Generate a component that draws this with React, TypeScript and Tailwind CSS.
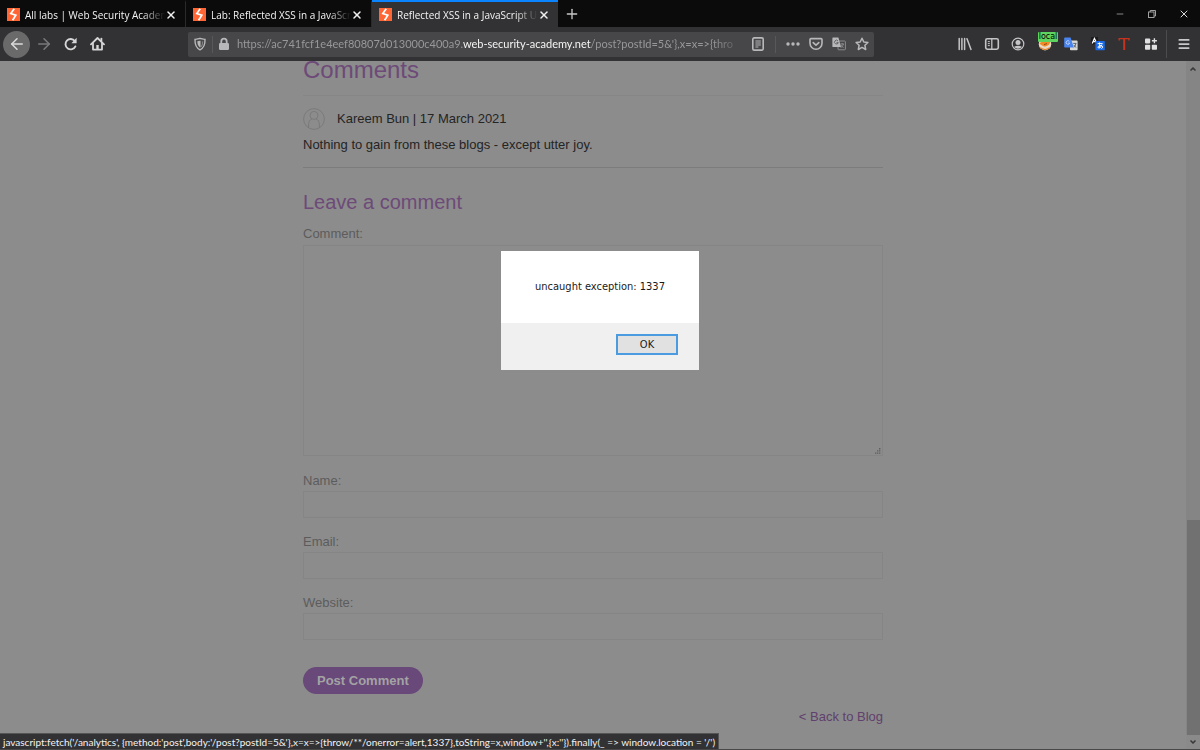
import type { ReactNode } from "react";
import { ArrowLeft, ArrowRight, ChevronDown, ChevronUp, Menu, Minus, Plus, X } from "lucide-react";

const TABS = [
  { id: 1, title: "All labs | Web Security Academ", active: false },
  { id: 2, title: "Lab: Reflected XSS in a JavaScri", active: false },
  { id: 3, title: "Reflected XSS in a JavaScript U", active: true },
];

const FIELDS = [
  { id: "name", label: "Name:", type: "text" },
  { id: "email", label: "Email:", type: "email" },
  { id: "website", label: "Website:", type: "text" },
];

const STATUS =
  "javascript:fetch('/analytics', {method:'post',body:'/post?postId=5&'},x=x=>{throw/**/onerror=alert,1337},toString=x,window+'',{x:''}).finally(_ => window.location = '/')";

const Favicon = () => (
  <svg viewBox="0 0 13 13" className="w-[13px] h-[13px] shrink-0">
    <rect width="13" height="13" fill="#ff6633" />
    <path d="M7.2 0.8 L3.8 5.6 L8.8 7.2 L5.6 12.2" fill="none" stroke="#fff" strokeWidth="1.7" />
  </svg>
);

const ReloadIcon = () => (
  <svg viewBox="0 0 16 16" className="w-4 h-4" fill="none" stroke="#d6d6d7" strokeWidth="1.9" strokeLinecap="round">
    <path d="M12.4 10.4 A5.2 5.2 0 1 1 11.8 5" />
    <path d="M13.6 1.8 V7.2 H8.4 Z" fill="#d6d6d7" stroke="none" />
  </svg>
);

const HomeIcon = () => (
  <svg viewBox="0 0 16 16" className="w-4 h-4" fill="none" stroke="#d6d6d7" strokeWidth="1.8" strokeLinecap="round" strokeLinejoin="round">
    <path d="M1 8.4 L7.5 2 L14 8.4" />
    <path d="M3 7.4 V13.6 H12 V7.4" />
    <path d="M7.5 13.5 V9" strokeWidth="2.4" strokeLinecap="butt" />
    <path d="M11.4 2.6 V5" />
  </svg>
);

const ShieldIcon = () => (
  <svg viewBox="0 0 14 14" className="w-3.5 h-3.5 shrink-0" fill="none" stroke="#b8b8ba" strokeWidth="1.4">
    <path d="M7 1.3 C9 2 10.6 2.2 12 2.4 C12.2 7.5 10.8 11 7 12.8 C3.2 11 1.8 7.5 2 2.4 C3.4 2.2 5 2 7 1.3 Z" />
    <path d="M7 3.8 V10.4 C5 9 4.3 7 4.3 4.3 Z" fill="#b8b8ba" stroke="none" />
    <path d="M7.6 3.8 V10.2 C9.2 9 9.6 7 9.7 4.4" strokeWidth="0.6" />
  </svg>
);

const LockIcon = () => (
  <svg viewBox="0 0 12 14" className="w-3 h-3.5 shrink-0">
    <rect x="1" y="6" width="10" height="7" rx="1.2" fill="#b8b8ba" />
    <path d="M3.3 6.5 V4.4 A2.7 2.7 0 0 1 8.7 4.4 V6.5" fill="none" stroke="#b8b8ba" strokeWidth="1.8" />
  </svg>
);

const ReaderIcon = () => (
  <svg viewBox="0 0 14 14" className="w-3.5 h-3.5" fill="none" stroke="#b8b8ba">
    <rect x="1.8" y="0.9" width="10.4" height="12.2" rx="1.4" strokeWidth="1.6" />
    <path d="M4.4 4 H9.8 M4.4 6 H9.8 M4.4 8 H9.8 M4.4 10 H7.4" strokeWidth="1.1" />
  </svg>
);

const DotsIcon = () => (
  <svg viewBox="0 0 14 14" className="w-3.5 h-3.5" fill="#b8b8ba">
    <circle cx="2" cy="7" r="1.7" />
    <circle cx="7" cy="7" r="1.7" />
    <circle cx="12" cy="7" r="1.7" />
  </svg>
);

const PocketIcon = () => (
  <svg viewBox="0 0 14 14" className="w-3.5 h-3.5" fill="none" stroke="#b8b8ba" strokeWidth="1.6" strokeLinecap="round" strokeLinejoin="round">
    <path d="M2 1.6 H12 Q13 1.6 13 2.6 V6.3 A6 6 0 0 1 1 6.3 V2.6 Q1 1.6 2 1.6 Z" />
    <path d="M4.2 5.6 L7 8.2 L9.8 5.6" />
  </svg>
);

const TranslateIcon = () => (
  <svg viewBox="0 0 14 14" className="w-3.5 h-3.5">
    <rect x="6" y="4" width="7.4" height="8.8" rx="0.8" fill="none" stroke="#8b8b8d" />
    <path d="M8.4 7 H12 M10.2 6 V7 M11.4 7 C11 9 9.6 10.2 8.6 10.6 M9 8 C9.6 9.4 10.8 10.2 11.6 10.6" fill="none" stroke="#9b9b9d" strokeWidth="0.8" />
    <path d="M1 0.5 H6.4 L9 10 H1 Q0.4 10 0.4 9.4 V1 Q0.4 0.5 1 0.5 Z" fill="#b8b8ba" />
    <path d="M6 4 A1.9 1.9 0 1 0 6.3 5.6 H4.5" fill="none" stroke="#5a5a5c" strokeWidth="0.9" />
  </svg>
);

const StarIcon = () => (
  <svg viewBox="0 0 14 14" className="w-3.5 h-3.5" fill="none" stroke="#b8b8ba" strokeWidth="1.5" strokeLinejoin="round">
    <path d="M7 1.2 L8.8 5 L12.9 5.5 L9.9 8.3 L10.7 12.5 L7 10.4 L3.3 12.5 L4.1 8.3 L1.1 5.5 L5.2 5 Z" />
  </svg>
);

const LibraryIcon = () => (
  <svg viewBox="0 0 16 16" className="w-4 h-4" fill="none" stroke="#c4c4c6" strokeWidth="1.5" strokeLinecap="round">
    <path d="M2.2 2.6 V13.4 M4.9 2.6 V13.4 M7.6 2.6 V13.4 M10 2.8 L14 13.4" />
  </svg>
);

const SidebarIcon = () => (
  <svg viewBox="0 0 16 16" className="w-4 h-4" fill="none" stroke="#c4c4c6">
    <rect x="1.7" y="2.8" width="12.6" height="10.4" rx="1.6" strokeWidth="1.6" />
    <path d="M7.8 3 V13" strokeWidth="1.3" />
    <path d="M3.8 5.6 H5.8 M3.8 7.6 H5.8 M3.8 9.6 H5.8" />
  </svg>
);

const AccountIcon = () => (
  <svg viewBox="0 0 16 16" className="w-4 h-4">
    <circle cx="8" cy="8" r="5.8" fill="none" stroke="#c4c4c6" strokeWidth="1.2" />
    <circle cx="8" cy="6.6" r="2.5" fill="#c4c4c6" />
    <path d="M3.9 11 Q8 8.6 12.1 11 Q8 14.6 3.9 11 Z" fill="#c4c4c6" />
  </svg>
);

const FoxIcon = () => (
  <svg viewBox="0 0 16 16" className="w-4 h-4">
    <circle cx="8" cy="8.2" r="6.2" fill="#e8d9c6" />
    <path d="M2.4 8 C4 4.6 8.6 6.4 13.4 4.6 C13.4 8 11 10.6 7.6 10.4 C5 10.2 4.6 8.4 2.4 8 Z" fill="#f08a24" />
    <path d="M3.2 11.6 Q8 15.4 12.8 11.6" fill="none" stroke="#e07a1a" strokeWidth="1.2" />
    <path d="M7 8.6 L10 7.6" stroke="#8a4510" strokeWidth="0.9" />
  </svg>
);

const GTranslateIcon = () => (
  <svg viewBox="0 0 16 16" className="w-4 h-4">
    <rect x="7" y="4.6" width="7.6" height="9.6" rx="0.8" fill="#d8d8d8" />
    <path d="M10.2 7.4 H13.4 M12.8 7.6 C12.4 9.8 11.6 11 10.8 11.4 M10.8 9 L13 11.6" fill="none" stroke="#5b6570" strokeWidth="1" />
    <path d="M2 1.6 H7.6 L10.8 11.6 H2 Q1.2 11.6 1.2 10.8 V2.4 Q1.2 1.6 2 1.6 Z" fill="#4a84ee" />
    <path d="M6.4 5.4 A1.8 1.8 0 1 0 6.7 7 H5.2" fill="none" stroke="#c5d8ff" strokeWidth="0.9" />
  </svg>
);

const KanaIcon = () => (
  <svg viewBox="0 0 16 16" className="w-4 h-4">
    <path d="M1 1 H8 V8 H4 L2.6 9.6 V8 H1 Z" fill="#1d1d1f" />
    <path d="M2.2 7.4 L4.4 2.4 L6.8 7 M3 5.6 H6" fill="none" stroke="#fff" strokeWidth="1.2" />
    <path d="M6.2 5 H14 Q14.8 5 14.8 5.8 V13.4 Q14.8 14.2 14 14.2 H6.2 Q5.4 14.2 5.4 13.4 V5.8 Q5.4 5 6.2 5 Z" fill="#1c6be8" />
    <path d="M7.6 7.6 H12.6 M9.6 6.4 C9.2 9 9.6 10.6 10.2 12 M11.8 8.6 C11.2 11 9.4 12.6 8.2 11.8 C7.4 10.8 9.2 9.2 11.2 9.6 C13.2 10 12.8 12 11.4 12.6" fill="none" stroke="#fff" strokeWidth="1" />
  </svg>
);

const TIcon = () => (
  <svg viewBox="0 0 16 16" className="w-4 h-4" fill="none" stroke="#c8321c">
    <path d="M3.2 4.4 V2.6 H13 V4.4" strokeWidth="1.4" />
    <path d="M8.2 3 V14" strokeWidth="2" />
  </svg>
);

const ExtensionsIcon = () => (
  <svg viewBox="0 0 16 16" className="w-4 h-4" fill="#e0e0e0">
    <rect x="2" y="2.4" width="5.2" height="5" rx="0.8" />
    <rect x="2" y="8.8" width="5.2" height="5" rx="0.8" />
    <rect x="8.8" y="8.8" width="5.2" height="5" rx="0.8" />
    <path d="M11.4 2.2 V7.2 M8.9 4.7 H13.9" stroke="#e0e0e0" strokeWidth="1.4" />
  </svg>
);

const RestoreIcon = () => (
  <svg viewBox="0 0 10 10" className="w-2.5 h-2.5" fill="none" stroke="#a0a0a0" strokeWidth="1">
    <rect x="1.5" y="3" width="5.5" height="5.5" />
    <path d="M3.2 3 V1.5 H8.5 V7 H7" />
  </svg>
);

const AvatarIcon = () => (
  <svg viewBox="0 0 22 22" className="w-[22px] h-[22px] shrink-0" fill="none" stroke="#787878" strokeWidth="0.9">
    <circle cx="11" cy="11" r="10.4" />
    <circle cx="11" cy="7.4" r="4" />
    <path d="M5.6 20 V16 Q5.6 11.6 9 11 M13 11 Q16.4 11.6 16.4 16 V20" />
  </svg>
);

const IconButton = ({ label, children }: { label: string; children: ReactNode }) => (
  <button aria-label={label} className="relative w-[18px] h-[18px] shrink-0 flex items-center justify-center">
    {children}
  </button>
);

const NavButton = ({ label, round, children }: { label: string; round?: boolean; children: ReactNode }) => (
  <button aria-label={label} className={`w-[27px] h-[27px] flex items-center justify-center rounded-full ${round ? "bg-[#6a6a6b]" : ""}`}>
    {children}
  </button>
);

export default function App() {
  return (
    <div className="h-screen flex flex-col overflow-hidden bg-[#8c8c8c] border-b border-[#484848] font-['Liberation_Sans',sans-serif] text-[13px]">
      {/* Tab strip */}
      <div className="h-[27px] shrink-0 flex bg-[#0b0b0c] font-['Open_Sans',sans-serif]">
        {TABS.map((tab) => (
          <div
            key={tab.id}
            className={`w-[186px] flex items-center pl-[7px] pr-2 border-t-2 ${tab.active ? "bg-[#323234] border-t-[#0a84ff]" : "border-t-transparent border-r border-r-[#2a2a2b]"}`}
          >
            <Favicon />
            <button className="ml-[5px] flex-1 min-w-0 text-left whitespace-nowrap text-[10px] leading-4 text-[#f4f4f4] [mask-image:linear-gradient(to_right,#000_84%,transparent)]">
              {tab.title}
            </button>
            <button aria-label="Close tab" className="w-3 h-3 flex items-center justify-center">
              <X className="w-3 h-3 shrink-0 text-[#f0f0f0]" strokeWidth={3} />
            </button>
          </div>
        ))}
        <button aria-label="New tab" className="w-[27px] flex items-center justify-center">
          <Plus className="w-4 h-4 text-[#c8c8c8]" strokeWidth={2} />
        </button>
        <div className="ml-auto flex items-center">
          <button aria-label="Minimize" className="w-8 flex justify-center"><Minus className="w-2.5 h-2.5 text-[#a0a0a0]" /></button>
          <button aria-label="Restore" className="w-8 flex justify-center"><RestoreIcon /></button>
          <button aria-label="Close window" className="w-8 flex justify-center"><X className="w-3 h-3 text-[#d8d8d8]" strokeWidth={2} /></button>
        </div>
      </div>

      {/* Navigation bar */}
      <div className="h-[34px] shrink-0 flex items-center bg-[#323234] pl-[3px]">
        <NavButton label="Back" round><ArrowLeft className="w-[18px] h-[18px] text-[#dcdcdc]" strokeWidth={2} /></NavButton>
        <NavButton label="Forward"><ArrowRight className="w-[18px] h-[18px] text-[#7a7a7c]" strokeWidth={2} /></NavButton>
        <NavButton label="Reload"><ReloadIcon /></NavButton>
        <NavButton label="Home"><HomeIcon /></NavButton>

        <div className="ml-[77px] mr-[82px] h-[25px] flex-1 min-w-0 flex items-center rounded-xs bg-[#474749] pl-[5px] pr-[3px]">
          <ShieldIcon />
          <div className="w-px h-[17px] ml-[5px] mr-[5px] bg-[#58585a]" />
          <LockIcon />
          <div
            role="textbox"
            aria-label="Address"
            className="ml-[7px] flex-1 min-w-0 overflow-hidden whitespace-nowrap font-['Lato',sans-serif] text-[11px] leading-5 text-[#98989a] [mask-image:linear-gradient(to_right,#000_94%,transparent)]"
          >
            https://ac741fcf1e4eef80807d013000c400a9.<span className="text-[#f4f4f4]">web-security-academy.net</span>/post?postId=5&amp;'{"}"},x=x=&gt;{"{"}thro
          </div>
          <div className="ml-[6px] flex items-center">
            <IconButton label="Reader view"><ReaderIcon /></IconButton>
            <div className="w-px h-[17px] mx-2 bg-[#58585a]" />
            <div className="flex gap-[5px]">
              <IconButton label="Page actions"><DotsIcon /></IconButton>
              <IconButton label="Save to Pocket"><PocketIcon /></IconButton>
              <IconButton label="Translate page"><TranslateIcon /></IconButton>
              <IconButton label="Bookmark"><StarIcon /></IconButton>
            </div>
          </div>
        </div>

        <div className="w-[204px] shrink-0 flex justify-between">
          <IconButton label="Library"><LibraryIcon /></IconButton>
          <IconButton label="Sidebars"><SidebarIcon /></IconButton>
          <IconButton label="Account"><AccountIcon /></IconButton>
          <IconButton label="Proxy switcher">
            <FoxIcon />
            <span className="absolute -top-[3px] left-[2px] px-px rounded-[1px] bg-[#5fd35f] font-['DejaVu_Sans',sans-serif] text-[8px] leading-[10px] text-black">local</span>
          </IconButton>
          <IconButton label="Google Translate"><GTranslateIcon /></IconButton>
          <IconButton label="Language tools"><KanaIcon /></IconButton>
          <IconButton label="Text tool"><TIcon /></IconButton>
          <IconButton label="Extensions"><ExtensionsIcon /></IconButton>
        </div>
        <div className="w-px h-7 ml-[6px] mr-2 bg-[#4c4c4e]" />
        <IconButton label="Menu"><Menu className="w-3.5 h-3.5 text-[#c8c8ca]" strokeWidth={3} /></IconButton>
        <div className="w-[7px]" />
      </div>

      {/* Page */}
      <div className="relative flex-1 min-h-0 flex overflow-hidden">
        <main className="flex-1 min-w-0">
          <div className="w-full max-w-[580px] mx-auto">
            <h1 className="text-[24px] leading-[18px] text-[#6d4a78]">Comments</h1>
            <hr className="mt-4 border-[#868686]" />
            <div className="mt-3 flex items-center gap-3 text-[#242424]">
              <AvatarIcon />
              <p className="leading-5">Kareem Bun | 17 March 2021</p>
            </div>
            <p className="mt-[5px] leading-5 text-[#242424]">Nothing to gain from these blogs - except utter joy.</p>
            <hr className="mt-3 border-[#7c7c7c]" />

            <h2 className="mt-[22px] text-[20px] leading-6 text-[#6d4a78]">Leave a comment</h2>
            <form className="mt-[10px] text-[#5c5c5c]" onSubmit={(e) => e.preventDefault()}>
              <label htmlFor="comment" className="block leading-5">Comment:</label>
              <div className="relative mt-px mb-[15px]">
                <textarea id="comment" className="block w-full h-[211px] resize-none border border-[#858585] bg-transparent px-2 py-1 outline-none" />
                <svg viewBox="0 0 6 6" className="absolute right-[2px] bottom-[2px] w-1.5 h-1.5" fill="#5e5e5e">
                  <path d="M4 0 H5.4 V1.4 H4 Z M4 2.2 H5.4 V3.6 H4 Z M4 4.4 H5.4 V5.8 H4 Z M2 2.2 H3.4 V3.6 H2 Z M2 4.4 H3.4 V5.8 H2 Z M0 4.4 H1.4 V5.8 H0 Z" />
                </svg>
              </div>
              {FIELDS.map((f) => (
                <div key={f.id} className="mb-[14px]">
                  <label htmlFor={f.id} className="block leading-5">{f.label}</label>
                  <input id={f.id} type={f.type} className="block w-full h-[27px] border border-[#858585] bg-transparent px-2 outline-none" />
                </div>
              ))}
              <button type="submit" className="mt-[27px] h-[27px] px-[14px] block rounded-full bg-[#69487a] font-bold text-[#a3a3a3]">
                Post Comment
              </button>
            </form>
            <div className="mt-[13px] text-right leading-5">
              <a href="#blog" className="text-[#60406c]">&lt; Back to Blog</a>
            </div>
          </div>
        </main>

        {/* Scrollbar */}
        <div className="w-3.5 shrink-0 flex flex-col items-center bg-[#858585]">
          <div className="h-4 flex items-center"><ChevronUp className="w-2 h-2 text-[#3a3a3a]" strokeWidth={5} /></div>
          <div className="flex-[443]" />
          <div className="flex-[215] w-[13px] bg-[#717171]" />
          <div className="h-3.5 w-full flex items-center justify-center bg-[#8a8a8a]"><ChevronDown className="w-2 h-2 text-[#3a3a3a]" strokeWidth={5} /></div>
        </div>

        {/* Link target shown over the bottom of the page */}
        <div className="absolute left-0 bottom-0 h-4 border-t border-r border-[#555] bg-[#323234] pl-[3px] pr-[3px] whitespace-nowrap font-['Lato',sans-serif] text-[10px] leading-4 text-[#f2f2f2]">
          {STATUS}
        </div>

        {/* Alert */}
        <div className="absolute inset-0 flex justify-center items-start pt-[190px]">
          <div role="alertdialog" aria-labelledby="alert-text" className="w-[198px] bg-white font-['DejaVu_Sans_Condensed','DejaVu_Sans',sans-serif] text-[11px] text-[#1a1a1a]">
            <p id="alert-text" className="h-[72px] text-center leading-[72px]">uncaught exception: 1337</p>
            <div className="h-[47px] flex items-start justify-end pt-[11px] pr-[21px] bg-[#f0f0f0]">
              <button className="w-[62px] h-[21px] border-2 border-[#4a9be0] bg-[#e1e1e1] leading-4">OK</button>
            </div>
          </div>
        </div>
      </div>
    </div>
  );
}
